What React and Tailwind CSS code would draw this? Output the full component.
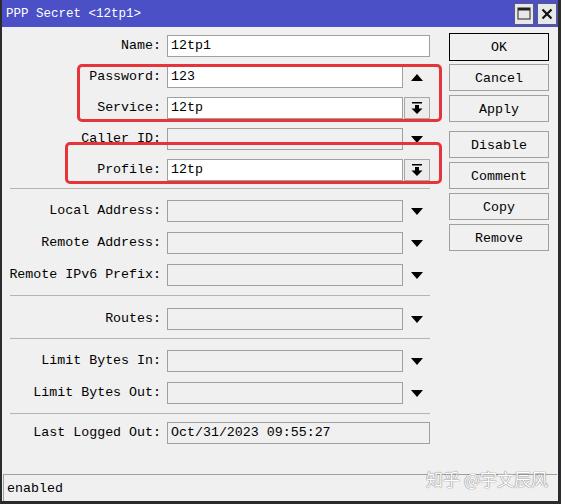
import React from "react";

const mono = { fontFamily: '"Liberation Mono", "DejaVu Sans Mono", monospace' };

function UpArrow() {
  return (
    <svg width="14" height="9" viewBox="0 0 14 9">
      <path d="M1 8 L7 1 L13 8 Z" fill="#000" />
    </svg>
  );
}

function DownArrow() {
  return (
    <svg width="14" height="9" viewBox="0 0 14 9">
      <path d="M1 1 L7 8 L13 1 Z" fill="#000" />
    </svg>
  );
}

function DropButton() {
  return (
    <div className="ml-[1px] flex h-[22px] w-[26px] items-center justify-center border border-[#a8a8a8] bg-[#ececec]">
      <svg width="12" height="14" viewBox="0 0 12 14">
        <rect x="1" y="1" width="10" height="1.5" fill="#000" />
        <rect x="4" y="4" width="4" height="4" fill="#000" />
        <path d="M0.5 7.5 L11.5 7.5 L6 13 Z" fill="#000" />
      </svg>
    </div>
  );
}

function Field({ label, value, white, tail }) {
  const full = tail === "none";
  return (
    <div className="flex h-[22px] items-center">
      <div className="w-[159px] whitespace-nowrap text-right">{label}:</div>
      <div
        className={`ml-[6px] flex h-[22px] items-center border border-[#a0a0a0] pl-[3px] ${
          full ? "w-[263px]" : "w-[236px]"
        } ${white ? "bg-white" : "bg-[#f0f0f0]"}`}
      >
        {value}
      </div>
      {tail === "up" && (
        <div className="flex w-[27px] justify-center">
          <UpArrow />
        </div>
      )}
      {tail === "down" && (
        <div className="flex w-[27px] justify-center">
          <DownArrow />
        </div>
      )}
      {tail === "drop" && <DropButton />}
    </div>
  );
}

function Sep() {
  return <div className="ml-[8px] w-[420px] border-t border-[#b4b4b4]" />;
}

function Btn({ children, strong, className = "" }) {
  return (
    <div
      className={`flex h-[27px] items-center justify-center border bg-[#f0f0f0] pt-[2px] ${
        strong ? "h-[28px] border-black" : "border-[#a0a0a0]"
      } ${className}`}
    >
      {children}
    </div>
  );
}

export default function App() {
  return (
    <div
      className="relative flex h-[504px] w-[561px] flex-col overflow-hidden border-b-[3px] border-l-[2px] border-r-[3px] border-[#2b2b2b] bg-[#f0f0f0] text-[13.3px] text-black"
      style={mono}
    >
      {/* Title bar */}
      <div className="flex h-[27px] shrink-0 items-center justify-between bg-[#4b50c6] pl-[4px] pr-[1px]">
        <span className="pt-[1px] text-[12.5px] text-white">PPP Secret &lt;12tp1&gt;</span>
        <div className="flex gap-[3px]">
          <div className="flex h-[22px] w-[20px] items-center justify-center border border-[#5a5a7a] bg-[#e8e8e8]">
            <svg width="14" height="13" viewBox="0 0 14 13">
              <rect x="1" y="1" width="12" height="11" fill="none" stroke="#222" strokeWidth="1" />
              <rect x="1" y="1" width="12" height="2.5" fill="#222" />
            </svg>
          </div>
          <div className="flex h-[22px] w-[20px] items-center justify-center border border-[#5a5a7a] bg-[#e8e8e8]">
            <svg width="12" height="12" viewBox="0 0 12 12">
              <path d="M1.5 1.5 L10.5 10.5 M10.5 1.5 L1.5 10.5" stroke="#111" strokeWidth="2.2" />
            </svg>
          </div>
        </div>
      </div>

      {/* Body */}
      <div className="flex flex-1">
        <div className="w-[428px]">
          <div className="flex flex-col gap-[9px] pb-[7px] pt-[8px]">
            <Field label="Name" value="12tp1" white tail="none" />
            <Field label="Password" value="123" white tail="up" />
            <Field label="Service" value="12tp" white tail="drop" />
            <Field label="Caller ID" value="" tail="down" />
            <Field label="Profile" value="12tp" white tail="drop" />
          </div>
          <Sep />
          <div className="flex flex-col gap-[10px] pb-[9px] pt-[11px]">
            <Field label="Local Address" value="" tail="down" />
            <Field label="Remote Address" value="" tail="down" />
            <Field label="Remote IPv6 Prefix" value="" tail="down" />
          </div>
          <Sep />
          <div className="flex flex-col pb-[8px] pt-[12px]">
            <Field label="Routes" value="" tail="down" />
          </div>
          <Sep />
          <div className="flex flex-col gap-[10px] pb-[9px] pt-[11px]">
            <Field label="Limit Bytes In" value="" tail="down" />
            <Field label="Limit Bytes Out" value="" tail="down" />
          </div>
          <Sep />
          <div className="flex flex-col pt-[8px]">
            <Field label="Last Logged Out" value="Oct/31/2023 09:55:27" tail="none" />
          </div>
        </div>

        <div className="ml-[19px] flex w-[100px] flex-col pt-[6px]">
          <Btn strong>OK</Btn>
          <Btn className="mt-[3px]">Cancel</Btn>
          <Btn className="mt-[4px]">Apply</Btn>
          <Btn className="mt-[9px]">Disable</Btn>
          <Btn className="mt-[4px]">Comment</Btn>
          <Btn className="mt-[4px]">Copy</Btn>
          <Btn className="mt-[4px]">Remove</Btn>
        </div>
      </div>

      {/* Status bar */}
      <div className="ml-[1px] mr-[1px] flex h-[27px] shrink-0 items-center border-l border-t border-[#a0a0a0] pl-[3px] pt-[1px]">
        enabled
      </div>

      {/* Highlight boxes */}
      <div className="pointer-events-none absolute left-[75px] top-[64px] h-[58px] w-[365px] rounded-[5px] border-[3px] border-[#e5343a]" />
      <div className="pointer-events-none absolute left-[63px] top-[142px] h-[42px] w-[377px] rounded-[5px] border-[3px] border-[#e5343a]" />

      {/* Watermark */}
      <div
        className="pointer-events-none absolute bottom-[10px] right-[10px] text-[17px] text-white [text-shadow:0_0_1px_#777,0_0_1px_#777]"
        style={{ fontFamily: '"Noto Sans CJK SC", sans-serif' }}
      >
        知乎 @宇文辰风
      </div>
    </div>
  );
}
